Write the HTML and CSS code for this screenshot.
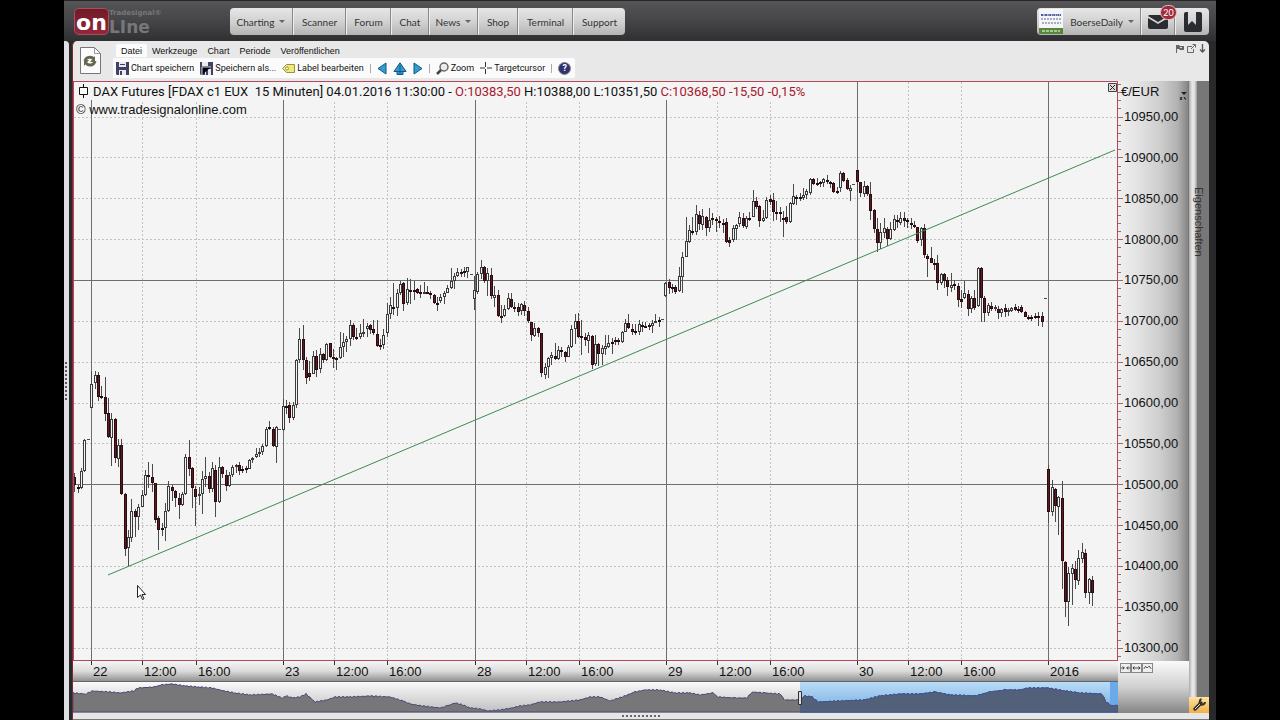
FILE: index.html
```html
<!DOCTYPE html>
<html lang="de">
  <head>
    <meta charset="UTF-8" />
    <meta name="viewport" content="width=device-width, initial-scale=1.0" />
    <title>Tradesignal Online</title>
    <link rel="stylesheet" href="styles.css">
  </head>
  <body>
    <div class="app">
      <header class="topbar">
        <a class="logo" href="#">
          <span class="logo-on">on</span>
          <span class="logo-side"><small>Tradesignal®</small><b>LIne</b></span>
        </a>
        <nav class="button-bar main-nav">
          <button>Charting <i class="caret"></i></button>
          <button>Scanner</button>
          <button>Forum</button>
          <button>Chat</button>
          <button>News <i class="caret"></i></button>
          <button>Shop</button>
          <button>Terminal</button>
          <button>Support</button>
        </nav>
        <div class="button-bar user-bar">
          <button class="user">
            <svg class="avatar" viewBox="0 0 24 25" aria-hidden="true">
              <path fill="#f4f5f8" d="M0 0h24v25H0z"/>
              <path stroke="#4e5a9c" stroke-width="2" stroke-dasharray="2 .6 1 .5" d="M2 6h20"/>
              <path stroke="#8f97ad" stroke-width="1.5" stroke-dasharray="2 1" d="M2 10h20M3 14h19"/>
              <path fill="#56883c" d="M0 19h24v6H0z"/>
              <path stroke="#c5dbb4" stroke-width="1.5" stroke-dasharray="3 1" d="M3 22h18"/>
            </svg>
            BoerseDaily <i class="caret"></i>
          </button>
          <button class="mail" aria-label="Nachrichten">
            <svg width="20" height="14" viewBox="0 0 20 14" aria-hidden="true">
              <path fill="#2b2c2f" d="M0 3l10 6 10-6v9a2 2 0 0 1-2 2H2a2 2 0 0 1-2-2zM1 0h18l1 1-10 6L0 1z"/>
            </svg>
            <span class="badge">20</span>
          </button>
          <button class="book" aria-label="Lesezeichen">
            <svg width="18" height="20" viewBox="0 0 18 20" aria-hidden="true">
              <path fill="#2b2c2f" d="M2 0h2v13l4-4 4 4V0h4a2 2 0 0 1 2 2v16a2 2 0 0 1-2 2H2a2 2 0 0 1-2-2V2a2 2 0 0 1 2-2z"/>
            </svg>
          </button>
        </div>
      </header>

      <div class="workspace">
        <div class="left-rail"><span class="grip-v"></span></div>
        <main class="panel">
          <div class="toolbar">
            <button class="document" aria-label="Dokument">
              <svg width="21" height="27" viewBox="0 0 21 27" aria-hidden="true">
                <path fill="#fbfbfb" stroke="#777" d="M.5.5h14l6 6v20H.5z"/>
                <path fill="none" stroke="#999" d="M14.5.5v6h6"/>
                <path fill="none" stroke="#66684f" stroke-width="3" d="M5 14c1-4 6-5 9-2M15 14c-1 5-7 5-9 2"/>
                <path fill="#66684f" d="M15 9v6h-5zM4 19v-6h5z"/>
              </svg>
            </button>
            <div class="ribbon">
              <div class="tabs">
                <button class="active">Datei</button>
                <button>Werkzeuge</button>
                <button>Chart</button>
                <button>Periode</button>
                <button>Veröffentlichen</button>
              </div>
              <div class="tools">
                <button>
                  <svg width="13" height="13" viewBox="0 0 13 13" aria-hidden="true"><path fill="#3f4266" d="M0 0h13v13H1l-1-1z"/><path fill="#e9e9ef" d="M3 0h7v5H3zM3 8h7v5H3z"/><path fill="#3f4266" d="M4 9h2v4H4zM4 2h5v1H4z"/></svg>
                  Chart speichern
                </button>
                <button>
                  <svg width="13" height="13" viewBox="0 0 13 13" aria-hidden="true"><path fill="#3f4266" d="M0 0h13v13H1l-1-1z"/><path fill="#e9e9ef" d="M2 0h6v4H2zM5 7h6v6H5z"/><path fill="#3f4266" d="M6 8h2v5H6zM9 2h2v3H9z"/><path stroke="#d5d5df" d="M2 13V5h9"/></svg>
                  Speichern als...
                </button>
                <button>
                  <svg width="13" height="9" viewBox="0 0 13 9" aria-hidden="true"><path fill="#f0e878" stroke="#96924c" d="M.5 4.500l4-4h8v8h-8z"/><circle cx="5" cy="4.500" r="1.500" fill="#fff" stroke="#96924c"/></svg>
                  Label bearbeiten
                </button>
                <i class="divider"></i>
                <button aria-label="Zurück"><svg width="10" height="13" viewBox="0 0 10 13" aria-hidden="true"><path fill="#2c9fd8" stroke="#17547c" d="M9 1v11L1 6.500z"/></svg></button>
                <button aria-label="Nach oben"><svg width="14" height="13" viewBox="0 0 14 13" aria-hidden="true"><path fill="#2c9fd8" stroke="#17547c" d="M7 .8L13 9.500h-3v3H4v-3H1z"/><path stroke="#17547c" d="M1 9.500h12M7 3v9"/></svg></button>
                <button aria-label="Vor"><svg width="10" height="13" viewBox="0 0 10 13" aria-hidden="true"><path fill="#2c9fd8" stroke="#17547c" d="M1 1v11l8-5.500z"/></svg></button>
                <i class="divider"></i>
                <button>
                  <svg width="13" height="13" viewBox="0 0 13 13" aria-hidden="true"><circle cx="8" cy="5" r="4" fill="#e8edf0" stroke="#666" stroke-width="1.500"/><path stroke="#444" stroke-width="2.500" d="M5 8l-4 4"/></svg>
                  Zoom
                </button>
                <button>
                  <svg width="12" height="12" viewBox="0 0 12 12" aria-hidden="true"><path stroke="#333" d="M0 6h5M7 6h5M5.500 0v5M5.500 7v5"/></svg>
                  Targetcursor
                </button>
                <i class="divider"></i>
                <button class="help" aria-label="Hilfe">?</button>
              </div>
            </div>
            <div class="window-tools">
              <svg width="9" height="9" viewBox="0 0 9 9" aria-hidden="true"><path fill="#666" d="M1 1h3l1 1h4v4H5L4 5H2v4H1z"/><path fill="#ddd" d="M5 3h2v1H5z"/></svg>
              <svg width="9" height="9" viewBox="0 0 9 9" aria-hidden="true"><path fill="none" stroke="#666" d="M5 2.500H.5v6h6V5M4 5l4-4M5.500.5h3v3"/></svg>
              <svg width="7" height="9" viewBox="0 0 7 9" aria-hidden="true"><path fill="none" stroke="#555" stroke-width="1.300" d="M3.500 0v8M1 5.500L3.500 8 6 5.500"/></svg>
            </div>
          </div>

          <div class="board">
            <div class="chart">
              <svg id="chart" class="plot" viewBox="74 82 1043 578" preserveAspectRatio="none" role="img" aria-label="DAX Futures 15 Minuten"></svg>
              <div class="legend">
                <p class="quote">
                  <svg width="9" height="14" viewBox="0 0 9 14" aria-hidden="true"><path fill="#fff" stroke="#111" d="M.5 3.500h8v7h-8zM4.500 0v3M4.500 11v3"/></svg>
                  <span>DAX Futures [FDAX c1 EUX&nbsp; 15 Minuten] 04.01.2016 11:30:00 - <em>O:10383,50</em> H:10388,00 L:10351,50 <em>C:10368,50 -15,50 -0,15%</em></span>
                </p>
                <p class="source">© www.tradesignalonline.com</p>
              </div>
              <button class="close" aria-label="Schließen"><svg width="9" height="9" viewBox="0 0 9 9" aria-hidden="true"><path fill="#ddd" stroke="#444" d="M.5.5h8v8h-8z"/><path stroke="#222" d="M2 2l5 5M7 2L2 7"/></svg></button>
              <svg class="cursor" width="9" height="16" viewBox="0 0 9 16" aria-hidden="true"><path fill="#fff" stroke="#222" d="M.5.500v12l3-2.500 2 4.500 1.500-.7-2-4.300h3.500z"/></svg>
            </div>
            <div class="price-axis">
              <div class="axis-head">€/EUR <svg width="8" height="10" viewBox="0 0 8 10" aria-hidden="true"><path fill="#222" d="M2 1h6L5 4z"/><path stroke="#222" d="M1 6l2 3M3 6L1 9M5 6l1 2h1"/></svg></div>
              <ul class="prices">
                <li>10950,00</li><li>10900,00</li><li>10850,00</li><li>10800,00</li><li>10750,00</li>
                <li>10700,00</li><li>10650,00</li><li>10600,00</li><li>10550,00</li><li>10500,00</li>
                <li>10450,00</li><li>10400,00</li><li>10350,00</li><li>10300,00</li>
              </ul>
              <svg id="ticks" class="ticks" viewBox="0 81 6 580" preserveAspectRatio="none" aria-hidden="true"></svg>
            </div>
            <div class="time-axis">
              <span>22</span><span>12:00</span><span>16:00</span>
              <span>23</span><span>12:00</span><span>16:00</span>
              <span>28</span><span>12:00</span><span>16:00</span>
              <span>29</span><span>12:00</span><span>16:00</span>
              <span>30</span><span>12:00</span><span>16:00</span>
              <span>2016</span>
            </div>
            <div class="corner">
              <button aria-label="Stauchen"><svg width="9" height="8" viewBox="0 0 11 10" aria-hidden="true"><path fill="none" stroke="#222" d="M0 5h4M7 5h4M2 3l2 2-2 2M9 3L7 5l2 2"/></svg></button>
              <button aria-label="Dehnen"><svg width="9" height="8" viewBox="0 0 11 10" aria-hidden="true"><path fill="none" stroke="#222" d="M1 5h9M3 3L1 5l2 2M8 3l2 2-2 2"/></svg></button>
              <button aria-label="Anpassen"><svg width="9" height="8" viewBox="0 0 11 10" aria-hidden="true"><path fill="none" stroke="#222" d="M1 6l2-3 2 2 2-2h1l2 3"/></svg></button>
            </div>
            <svg id="overview" class="overview" viewBox="73 682 1045 31" preserveAspectRatio="none" role="img" aria-label="Übersicht"></svg>
            <div class="side-strip"></div>
            <aside class="properties">
              <span>Eigenschaften</span>
            </aside>
            <button class="wrench" aria-label="Einstellungen"><svg width="14" height="14" viewBox="0 0 14 14" aria-hidden="true"><path fill="none" stroke="#333" stroke-width="3.500" stroke-linecap="round" d="M3 11l6-6"/><path fill="none" stroke="#333" stroke-width="2" d="M9.500 1C7 2 7 6 9 6.500S13 6 13 4"/><path stroke="#ddd" d="M3 11l5-5"/></svg></button>
          </div>
          <div class="bottom-bar"><span class="grip-h"></span></div>
        </main>
      </div>
    </div>
    <script src="chart.js"></script>
  </body>
</html>
```
FILE: styles.css
```css
* {
  box-sizing: border-box;
}

body {
  margin: 0;
  background-color: #000;
  color: #111;
  font-family: "Liberation Sans", Arial, sans-serif;
  font-size: 13px;
}

button {
  margin: 0;
  padding: 0;
  border: none;
  background: none;
  color: inherit;
  font: inherit;
  cursor: pointer;
}

svg {
  display: block;
  flex: none;
}

.app {
  display: flex;
  flex-direction: column;
  min-height: 100vh;
  margin: 0 5%;
  background-color: #29292b;
}

/* top bar */
.topbar {
  display: flex;
  align-items: flex-start;
  height: 41px;
  padding: 7px 7px 0 10px;
  border-top: 1px solid #2a2628;
  background: linear-gradient(#555557, #454547 50%, #303033);
}

.logo {
  display: flex;
  width: 156px;
  text-decoration: none;
  font-family: "DejaVu Sans", sans-serif;
  font-weight: bold;
}

.logo-on {
  width: 35px;
  height: 27px;
  border: 1px solid #a8505c;
  border-radius: 5px;
  background: linear-gradient(#701a28, #93283a);
  color: #fff;
  font-size: 22px;
  line-height: 28px;
  text-align: center;
}

.logo-side {
  display: flex;
  flex-direction: column;
  color: #77777a;
}

.logo-side small {
  padding-top: 1px;
  font-size: 7px;
  line-height: 8px;
}

.logo-side b {
  font-size: 17px;
  line-height: 20px;
}

.button-bar {
  display: flex;
  height: 27px;
  border-radius: 4px;
  background: linear-gradient(#e6e6e6, #d2d2d2 50%, #b4b4b4);
  color: #333;
  font-family: Lato, sans-serif;
  font-size: 10px;
}

.button-bar button {
  display: flex;
  align-items: center;
  justify-content: center;
  border-right: 1px solid #888;
  border-left: 1px solid #eee;
}

.button-bar button:first-child {
  border-left: none;
}

.button-bar button:last-child {
  border-right: none;
}

.main-nav {
  display: grid;
  grid-template-columns: 63px 53px 45px 38px 49px 40px 55px 52px;
}

.caret {
  margin-left: 5px;
  border: 3px solid transparent;
  border-top-color: #666;
  border-bottom: none;
}

.user-bar {
  margin-left: auto;
}

.user {
  padding: 0 6px 0 2px;
}

.avatar {
  width: 24px;
  height: 25px;
  margin-right: 7px;
}

.mail {
  position: relative;
  width: 34px;
}

.book {
  width: 34px;
}

.badge {
  position: absolute;
  top: -3px;
  right: -3px;
  width: 17px;
  height: 15px;
  border: 1px solid #e5c5c9;
  border-radius: 8px;
  background-color: #a02a3a;
  color: #fff;
  font-size: 9px;
  line-height: 13px;
  text-align: center;
}

/* workspace */
.workspace {
  display: flex;
  flex: 1;
  padding-right: 7px;
  background: #29292b;
}

.left-rail {
  display: flex;
  align-items: center;
  width: 5px;
  margin-right: 3px;
  border-radius: 0 4px 0 0;
  background-color: #dfdfe3;
}

.grip-v {
  width: 2px;
  height: 38px;
  margin-left: 1px;
  background: repeating-linear-gradient(#555 0 2px, transparent 2px 4px);
}

.panel {
  display: flex;
  flex: 1;
  flex-direction: column;
  min-width: 0;
  border-radius: 5px 5px 0 0;
  border-left: 1px solid #7c2936;
  background-color: #e8e8e8;
}

.toolbar {
  display: flex;
  align-items: flex-start;
  height: 40px;
  padding: 3px 3px 0 7px;
}

.document {
  margin: 3px 12px 0 0;
}

.ribbon {
  font-size: 9px;
}

.tabs {
  display: flex;
  padding-left: 3px;
}

.tabs button {
  height: 13px;
  padding: 0 5px;
  border-radius: 2px 2px 0 0;
}

.tabs .active,
.tools {
  background-color: #fbfbfb;
}

.tools {
  display: flex;
  align-items: center;
  gap: 6px;
  height: 20px;
  margin-top: 1px;
  padding: 0 4px 0 3px;
  border-radius: 0 2px 2px 0;
  font-family: Roboto, sans-serif;
}

.tools button {
  display: flex;
  align-items: center;
  gap: 2px;
}

.divider {
  width: 1px;
  height: 9px;
  background-color: #aaa;
}

.tools .help {
  justify-content: center;
  width: 13px;
  height: 13px;
  border: 1px solid #888;
  border-radius: 50%;
  background-color: #2f3372;
  color: #fff;
  font-weight: bold;
}

.window-tools {
  display: flex;
  gap: 3px;
  margin-left: auto;
}

/* chart */
.board {
  display: grid;
  flex: 1;
  grid-template-columns: minmax(0, 1fr) 71px 8px 12px;
  grid-template-rows: minmax(580px, 1fr) 21px 31px;
}

.chart {
  position: relative;
  border: 1px solid #b04a5c;
  background-color: #f4f4f4;
}

.plot {
  position: absolute;
  width: 100%;
  height: 100%;
  shape-rendering: crispEdges;
}

.grid-solid {
  stroke: #6e6e6e;
}

.grid-dash {
  stroke: #c2c2c2;
  stroke-dasharray: 2 2;
}

.wick {
  stroke: #4a4a4a;
}

.up {
  fill: #f4f4f4;
  stroke: #3a3a3a;
}

.down {
  fill: #5a1a20;
  stroke: #2a0c10;
}

.trend {
  stroke: #3f8a50;
  shape-rendering: auto;
}

.legend {
  position: absolute;
  top: 0;
  left: 2px;
}

.legend p {
  display: flex;
  align-items: center;
  height: 18px;
  margin: 0;
}

.legend .quote {
  gap: 5px;
  padding-left: 3px;
  background-color: #f4f4f4;
  font-family: Roboto, sans-serif;
}

.legend em {
  color: #a8182f;
  font-style: normal;
}

.close {
  position: absolute;
  top: 1px;
  right: 0;
}

.cursor {
  position: absolute;
  top: 87%;
  left: 6%;
}

.price-axis {
  position: relative;
  display: grid;
  grid-template-rows: 27fr 553fr;
  border-right: 1px solid #777;
  background: linear-gradient(90deg, #f0f0f0, #e2e2e2 30%, #cecece 60%, #b2b2b2 85%, #858585);
}

.axis-head {
  display: flex;
  justify-content: space-between;
  padding: 3px 1px 0 3px;
}

.axis-head svg {
  margin-top: 7px;
}

.prices {
  display: grid;
  grid-template-rows: repeat(13, 41fr) 22fr;
  margin: 0;
  padding: 0 0 0 6px;
  list-style: none;
  line-height: 18px;
}

.ticks {
  position: absolute;
  width: 6px;
  height: 100%;
  stroke: #a86570;
  shape-rendering: crispEdges;
}

.time-axis {
  display: grid;
  grid-row: 2;
  grid-template-columns: 51fr 54fr 87fr 51fr 53fr 88fr 51fr 53fr 87fr 51fr 53fr 87fr 51fr 53fr 87fr 70fr;
  padding-left: 18px;
  border-bottom: 1px solid #666;
  background: linear-gradient(#f6f6f6, #dcdcdc 50%, #929292);
  line-height: 22px;
}

.time-axis span {
  height: 20px;
  min-width: 0;
  padding-left: 2px;
  background: linear-gradient(#333, #333) 0 0 / 1px 4px no-repeat;
}

.corner {
  display: flex;
  grid-row: 2 / 4;
  grid-column: 2;
  align-items: flex-start;
  padding: 2px 2px;
  background: linear-gradient(#fafafa, #d0d0d0 50%, #858585);
}

.corner button {
  border: 1px solid #888;
  background-color: #eee;
}

.overview {
  grid-row: 3;
  grid-column: 1;
  width: 100%;
  height: 31px;
}

.side-strip {
  grid-row: 1 / 4;
  grid-column: 3;
  background: linear-gradient(90deg, #aaa, #e8e8e8 40%, #ddd 70%, #999);
}

.properties {
  grid-row: 1 / 4;
  grid-column: 4;
  padding-top: 106px;
  background-color: #777;
  color: #333;
  font-size: 11px;
  line-height: 12px;
}

.properties span {
  display: block;
  margin-left: -4px;
  writing-mode: vertical-rl;
}

.wrench {
  display: flex;
  grid-row: 3;
  grid-column: 3 / 5;
  align-items: center;
  align-self: end;
  justify-content: center;
  height: 16px;
  background: linear-gradient(#ffe2a0, #f0b048);
}

.bottom-bar {
  display: flex;
  align-items: center;
  justify-content: center;
  height: 7px;
  border-bottom: 1px solid #777;
  background-color: #e6e6e6;
}

.grip-h {
  width: 38px;
  height: 2px;
  background: repeating-linear-gradient(90deg, #666 0 2px, transparent 2px 4px);
}
```
FILE: chart.js
```js
const NS = "http://www.w3.org/2000/svg";

// high, body top, body bottom, low, 1 = falling
const candles = [
  [473,477,485,492,1],[485,487,488,493,1],[468,471,488,489,0],[439,440,471,472,0],[439,439,439,439,0],
  // 22
  [371,384,408,408,0],[371,375,383,389,0],[372,375,397,401,1],[386,396,397,399,1],[377,397,414,421,1],
  [398,413,437,438,1],[413,419,438,466,0],[418,419,458,463,1],[439,445,459,467,0],[439,445,494,495,1],
  [493,494,549,556,1],[530,537,548,566,0],[499,511,538,542,0],[509,511,517,537,1],[504,507,517,530,0],
  [490,495,507,507,0],[470,475,495,496,0],[462,475,477,488,1],[464,477,483,492,1],[483,483,520,523,1],
  [516,518,530,550,1],[523,528,529,536,1],[503,511,528,541,0],[481,486,511,512,0],[485,487,491,501,1],
  [490,491,498,507,1],[493,498,505,519,1],[492,494,505,506,0],[454,457,494,495,0],[440,457,469,476,1],
  [467,468,488,508,1],[486,489,497,526,1],[487,494,495,505,0],[471,479,494,514,0],[457,476,479,487,0],
  [472,476,489,493,1],[462,468,489,492,0],[465,470,502,517,1],[457,467,502,503,0],[466,467,474,478,1],
  [470,475,486,491,1],[472,475,486,487,0],[465,467,475,477,0],[464,465,467,473,0],[462,465,471,475,1],
  [466,469,470,473,1],[466,468,469,473,1],[459,460,469,469,0],[457,458,460,463,0],[448,454,457,458,0],
  [448,452,454,457,0],[444,446,452,455,0],[427,429,446,447,0],[421,427,429,430,1],[427,429,446,447,1],
  [426,427,447,463,0],[429,429,429,429,0],
  // 23
  [399,406,430,431,0],[400,406,407,414,1],[402,405,418,423,1],[402,405,418,420,0],[359,360,405,408,0],
  [328,339,360,363,0],[325,339,360,370,1],[357,360,378,384,1],[361,373,377,381,1],[351,356,374,374,0],
  [350,356,370,377,1],[348,354,369,373,0],[353,354,360,363,1],[343,344,360,361,0],[343,343,357,358,1],
  [349,357,359,368,1],[357,358,359,370,1],[332,347,358,359,0],[333,342,347,357,0],[336,339,342,352,0],
  [320,325,339,346,0],[323,325,337,340,1],[328,337,338,340,1],[324,333,337,339,0],[319,332,334,337,0],
  [323,326,329,337,0],[324,325,330,334,1],[320,329,333,335,1],[320,334,346,347,1],[339,345,346,350,1],
  [329,335,345,349,0],[303,314,333,337,0],[297,305,314,319,0],[283,307,308,315,1],[289,293,308,316,0],
  [281,284,293,295,0],[282,283,304,311,1],[278,289,303,305,0],[279,290,291,304,1],[281,290,291,300,1],
  [288,289,293,294,1],[285,292,293,298,1],[282,292,293,294,0],[286,292,293,294,1],[291,293,294,299,1],
  [294,295,303,304,1],[297,303,304,311,1],[294,297,301,303,0],[291,293,297,304,0],[285,288,293,293,0],
  [268,281,288,289,0],[273,276,281,289,0],[268,272,276,277,0],[269,272,273,277,1],[267,271,272,277,1],
  [267,267,272,278,0],[274,274,274,274,0],
  // 28
  [276,290,299,310,0],[272,274,292,294,0],[260,267,274,279,0],[266,267,281,283,1],[268,273,281,296,0],
  [268,275,296,299,1],[286,295,298,307,0],[290,295,316,317,1],[305,316,317,323,1],[305,309,316,317,0],
  [293,298,309,310,0],[293,299,307,308,1],[302,307,308,312,1],[303,307,312,316,1],[303,304,311,315,0],
  [301,305,311,316,1],[307,311,321,323,1],[322,322,335,341,1],[323,328,336,337,0],[327,328,333,337,1],
  [333,333,373,377,1],[363,367,375,379,0],[357,358,367,378,0],[352,355,358,365,0],[343,356,359,360,1],
  [346,350,359,360,0],[347,350,352,357,1],[351,352,357,362,1],[345,347,357,357,0],[325,329,347,348,0],
  [314,321,329,344,0],[313,321,337,338,1],[320,336,337,355,1],[333,337,340,346,1],[332,335,341,353,0],
  [335,336,365,369,1],[335,344,364,366,0],[343,344,354,366,1],[345,348,354,365,0],[335,346,349,355,0],
  [335,343,347,348,0],[338,342,343,354,1],[337,340,341,345,1],[338,340,341,345,1],[331,332,342,343,0],
  [319,323,332,332,0],[314,323,328,329,1],[324,329,332,335,1],[324,331,332,335,1],[320,324,332,335,0],
  [322,325,326,332,1],[322,326,327,328,1],[323,325,327,330,1],[320,323,326,333,0],[314,321,323,323,0],
  [317,320,322,327,1],[319,319,319,319,0],
  // 29
  [282,283,296,297,0],[279,282,288,294,1],[284,287,288,293,1],[285,287,292,294,1],[267,276,291,292,0],
  [252,257,277,293,0],[217,241,257,257,0],[225,230,242,243,0],[217,231,233,235,1],[205,214,232,235,0],
  [211,215,224,230,1],[209,216,225,230,0],[216,217,228,236,1],[208,220,228,232,0],[213,218,220,225,1],
  [217,219,220,232,1],[216,221,223,228,1],[219,223,224,233,1],[218,222,242,243,1],[237,240,243,247,1],
  [225,228,240,242,0],[224,225,229,240,0],[212,217,224,227,0],[213,218,226,228,1],[216,218,227,229,0],
  [212,218,219,221,1],[190,201,217,217,0],[197,201,207,209,1],[205,206,221,227,1],[210,218,221,222,0],
  [197,200,218,219,0],[195,199,202,205,1],[193,200,212,221,1],[201,212,213,220,1],[207,212,213,222,1],
  [211,218,219,237,1],[206,217,222,224,1],[202,203,222,223,0],[184,196,204,205,0],[195,197,198,205,1],
  [193,197,198,201,1],[188,195,198,200,0],[189,191,195,199,0],[178,179,193,195,0],[178,179,184,185,1],
  [178,183,184,186,1],[181,182,183,187,1],[178,179,183,187,0],[175,180,182,184,1],[181,182,183,188,1],
  [182,183,192,193,1],[187,191,193,194,1],[171,173,188,192,0],[172,173,181,182,1],[178,180,189,190,1],
  [185,188,191,201,0],[184,184,184,184,0],
  // 30
  [170,170,182,192,1],[182,182,193,197,1],[181,186,194,197,0],[185,186,194,196,1],[182,194,211,220,1],
  [209,210,229,233,1],[218,229,243,252,1],[223,232,243,249,0],[218,228,233,238,0],[227,229,239,246,1],
  [222,229,239,240,0],[215,219,230,231,0],[215,220,222,228,1],[212,218,223,225,0],[212,218,221,227,1],
  [218,220,222,228,1],[218,223,225,229,1],[221,225,227,228,1],[227,227,241,243,1],[227,228,240,246,0],
  [224,228,255,258,1],[254,256,259,277,1],[247,258,263,263,1],[259,263,264,270,1],[255,263,283,290,1],
  [273,274,283,285,0],[273,274,281,288,1],[277,280,287,296,1],[273,285,288,292,0],[280,284,286,290,1],
  [283,286,300,307,1],[290,299,302,308,1],[281,293,298,299,0],[290,294,309,316,1],[296,298,309,313,0],
  [290,298,308,310,1],[267,268,306,307,0],[267,268,298,322,1],[296,298,313,322,1],[303,305,313,316,0],
  [302,306,309,311,1],[305,307,309,311,0],[306,309,313,319,1],[308,309,313,317,0],[304,308,312,317,1],
  [308,310,312,316,0],[307,308,311,312,0],[304,307,310,311,1],[306,309,311,313,1],[305,307,312,313,1],
  [311,312,317,317,1],[315,317,318,320,1],[315,317,318,321,1],[313,316,317,319,1],[312,316,318,326,1],
  [312,316,322,327,1],[298,298,298,298,0],
  // 2016
  [465,469,512,523,1],[480,487,512,516,0],[488,489,506,522,1],[496,497,507,535,0],[481,498,561,589,1],
  [561,562,602,617,1],[567,573,602,626,0],[564,568,574,605,0],[561,569,580,589,1],[550,558,581,585,0],
  [543,552,559,563,0],[549,553,593,598,1],[578,579,593,604,0],[576,580,593,606,1]
];

const days = [91, 283, 475, 666, 857, 1048];
const hours = [142, 196, 334, 387, 526, 579, 717, 770, 908, 961];

const profile = [
  [73,693],[86,694],[92,691],[110,692],[120,693],[134,691],[138,688],[155,687],[160,685],[172,684],
  [185,686],[198,687],[212,688],[224,691],[235,693],[250,695],[272,694],[282,698],[287,696],[292,698],
  [300,697],[306,694],[315,702],[327,700],[335,697],[350,697],[370,696],[390,697],[403,701],[410,704],
  [422,706],[440,708],[447,706],[455,703],[463,705],[470,708],[480,709],[488,711],[500,710],[512,708],
  [520,706],[530,705],[540,702],[560,702],[580,700],[590,697],[600,697],[610,701],[622,697],[635,692],
  [645,690],[660,690],[675,693],[690,693],[700,695],[713,693],[718,697],[735,698],[747,698],[752,692],
  [765,693],[780,694],[785,700],[800,700],[805,696],[812,697],[818,702],[840,701],[865,700],[880,696],
  [900,694],[920,694],[935,692],[950,695],[975,696],[990,692],[1005,690],[1020,690],[1028,688],[1048,688],
  [1065,691],[1080,693],[1102,694],[1106,702],[1112,706],[1118,705]
];

function add(parent, tag, attrs) {
  const el = document.createElementNS(NS, tag);
  for (const key in attrs) el.setAttribute(key, attrs[key]);
  parent.appendChild(el);
}

function line(parent, x1, y1, x2, y2, cls) {
  add(parent, "line", { x1, y1, x2, y2, class: cls });
}

function drawChart() {
  const svg = document.getElementById("chart");
  hours.forEach((x) => line(svg, x + 0.5, 82, x + 0.5, 660, "grid-dash"));
  for (let i = 0; i < 14; i++) {
    const y = Math.round(116.6 + i * 40.86) + 0.5;
    line(svg, 74, y, 1117, y, i === 4 || i === 9 ? "grid-solid" : "grid-dash");
  }
  days.forEach((x) => line(svg, x + 0.5, 82, x + 0.5, 660, "grid-solid"));

  candles.forEach(([high, top, bottom, low, falling], i) => {
    const x = Math.round(91.2 + (i - 5) * 3.358) + 0.5;
    if (high === low) {
      line(svg, x - 1.5, high + 0.5, x + 1.5, high + 0.5, "wick");
      return;
    }
    line(svg, x, high, x, low, "wick");
    add(svg, "rect", {
      x: x - 1,
      y: top + 0.5,
      width: 2,
      height: Math.max(bottom - top - 1, 1),
      class: falling ? "down" : "up"
    });
  });

  line(svg, 108, 575, 1115, 150, "trend");
}

function drawTicks() {
  const svg = document.getElementById("ticks");
  for (let i = -4; i < 67; i++) {
    const y = Math.round(116.6 + i * 8.172) + 0.5;
    line(svg, 0, y, i % 5 === 0 ? 5 : 3, y, "");
  }
}

function drawOverview() {
  const svg = document.getElementById("overview");
  // small steps between the points keep the outline ragged
  let d = "M73 712";
  for (let p = 0; p < profile.length - 1; p++) {
    const [x1, y1] = profile[p];
    const [x2, y2] = profile[p + 1];
    for (let x = x1; x < x2; x += 2) {
      const y = y1 + ((y2 - y1) * (x - x1)) / (x2 - x1) + Math.sin(x * 1.7) * 0.7;
      d += `L${x} ${y.toFixed(1)}`;
    }
  }
  d += "L1118 706V712Z";
  svg.innerHTML = `
    <defs>
      <linearGradient id="sky" x2="0" y2="1"><stop stop-color="#fafafa"/><stop offset="1" stop-color="#bdbdbd"/></linearGradient>
      <linearGradient id="range" x2="0" y2="1"><stop stop-color="#b9dcf8"/><stop offset="1" stop-color="#75aade"/></linearGradient>
      <clipPath id="selected"><path d="M800 682h318v31H800z"/></clipPath>
    </defs>
    <path fill="url(#sky)" d="M73 682h1045v31H73z"/>
    <path fill="url(#range)" d="M800 682h318v31H800z"/>
    <path fill="#6aaae8" d="M1110 682h8v31h-8z"/>
    <path fill="#777779" stroke="#4b4b78" d="${d}"/>
    <path fill="#526079" stroke="#3f5590" clip-path="url(#selected)" d="${d}"/>
    <path fill="#ddd" stroke="#333" d="M798.500 691.500h3v13h-3z"/>`;
}

drawChart();
drawTicks();
drawOverview();
```
